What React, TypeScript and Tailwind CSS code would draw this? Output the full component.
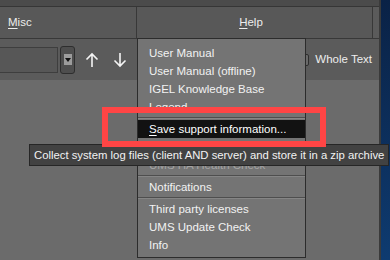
import React from "react";

type Item =
  | { kind: "item"; label: string; mnemonic?: number; active?: boolean; disabled?: boolean }
  | { kind: "sep" };

const helpItems: Item[] = [
  { kind: "item", label: "User Manual" },
  { kind: "item", label: "User Manual (offline)" },
  { kind: "item", label: "IGEL Knowledge Base" },
  { kind: "item", label: "Legend" },
  { kind: "sep" },
  { kind: "item", label: "Save support information...", mnemonic: 0, active: true },
  { kind: "item", label: "Collect server logs" },
  { kind: "item", label: "UMS HA Health Check", disabled: true },
  { kind: "sep" },
  { kind: "item", label: "Notifications" },
  { kind: "sep" },
  { kind: "item", label: "Third party licenses" },
  { kind: "item", label: "UMS Update Check" },
  { kind: "item", label: "Info" },
];

function Mnemonic({ text, index }: { text: string; index?: number }) {
  if (index === undefined) return <>{text}</>;
  return (
    <>
      {text.slice(0, index)}
      <span className="underline underline-offset-[2px]">{text[index]}</span>
      {text.slice(index + 1)}
    </>
  );
}

function ArrowUp() {
  return (
    <svg width="14" height="16" viewBox="0 0 14 16" fill="none">
      <path d="M7 15V2M1.5 7.5L7 2l5.5 5.5" stroke="#f4f4f4" strokeWidth="1.6" />
    </svg>
  );
}

function ArrowDown() {
  return (
    <svg width="14" height="16" viewBox="0 0 14 16" fill="none">
      <path d="M7 1v13M1.5 8.5L7 14l5.5-5.5" stroke="#f4f4f4" strokeWidth="1.6" />
    </svg>
  );
}

export default function App() {
  return (
    <div className="relative flex h-[260px] w-[390px] overflow-hidden font-['Liberation_Sans',Arial,sans-serif] text-[11.5px] text-[#ededed]">
      {/* main window */}
      <div className="flex w-[379px] flex-col">
        <div className="h-[7px] border-b border-[#363636] bg-[#4b4b4b]" />
        <div className="flex h-[32px] border-b border-[#383838] bg-[#585858]">
          <div className="flex w-[137px] items-center border-r border-[#383838] pl-[8px] pt-[1px]">
            <Mnemonic text="Misc" index={0} />
          </div>
          <div className="flex flex-1 items-center justify-center border-r border-[#383838] pr-[7px] pt-[1px]">
            <Mnemonic text="Help" index={0} />
          </div>
          <div className="w-[6px] bg-[#5b5b5b]" />
        </div>
        <div className="flex h-[41px] items-center bg-[#5b5b5b]">
          <div className="h-[26px] w-[58px] border border-l-0 border-[#3e3e3e] bg-[#575757]" />
          <div className="ml-[2px] flex h-[28px] w-[15px] items-center justify-center rounded-[3px] border border-[#2e2e2e] bg-[#4e4e4e]">
            <div className="flex h-[11px] w-[8px] items-center justify-center bg-[#9c9c9c]">
              <div className="h-0 w-0 border-x-[3px] border-t-[4px] border-x-transparent border-t-[#111]" />
            </div>
          </div>
          <div className="ml-[10px]">
            <ArrowUp />
          </div>
          <div className="ml-[14px]">
            <ArrowDown />
          </div>
          <div className="ml-auto mr-[7px] flex items-center gap-[6px]">
            <div className="h-[12px] w-[12px] rounded-[2px] border border-[#2e2e2e] bg-[#6a6a6a]" />
            <span>Whole Text</span>
          </div>
        </div>
        <div className="flex-1 bg-[#6b6b6b]" />
      </div>
      <div className="w-[2px] bg-[#3a3a3a]" />
      <div className="flex-1 bg-gradient-to-b from-[#0a2246] to-[#0e3b70]" />

      {/* Help menu */}
      <div className="absolute left-[137px] top-[38px] w-[169px] border border-[#2c2c2c] bg-[#747474] pb-[3px] pt-[5px]">
        {helpItems.map((it, i) =>
          it.kind === "sep" ? (
            <div key={i} className="flex h-[4px] flex-col justify-center">
              <div className="h-px bg-[#4e4e4e]" />
              <div className="h-px bg-[#858585]" />
            </div>
          ) : (
            <div
              key={i}
              className={
                "flex h-[18px] items-center pl-[11px] pt-[2px] " +
                (it.active ? "bg-[#121212] text-white" : it.disabled ? "text-[#a4a4a4]" : "text-[#f2f2f2]")
              }
            >
              <Mnemonic text={it.label} index={it.mnemonic} />
            </div>
          )
        )}
      </div>

      {/* tooltip */}
      <div className="absolute left-[29px] top-[144px] flex h-[22px] w-[360px] items-center overflow-hidden whitespace-nowrap border border-[#262626] bg-[#424242] pl-[4px] pt-[1px] text-[11.3px] text-[#f2f2f2]">
        Collect system log files (client AND server) and store it in a zip archive
      </div>

      {/* annotation */}
      <div className="absolute left-[102px] top-[107px] h-[40px] w-[224px] border-[6px] border-[#ff4545]" />
    </div>
  );
}
